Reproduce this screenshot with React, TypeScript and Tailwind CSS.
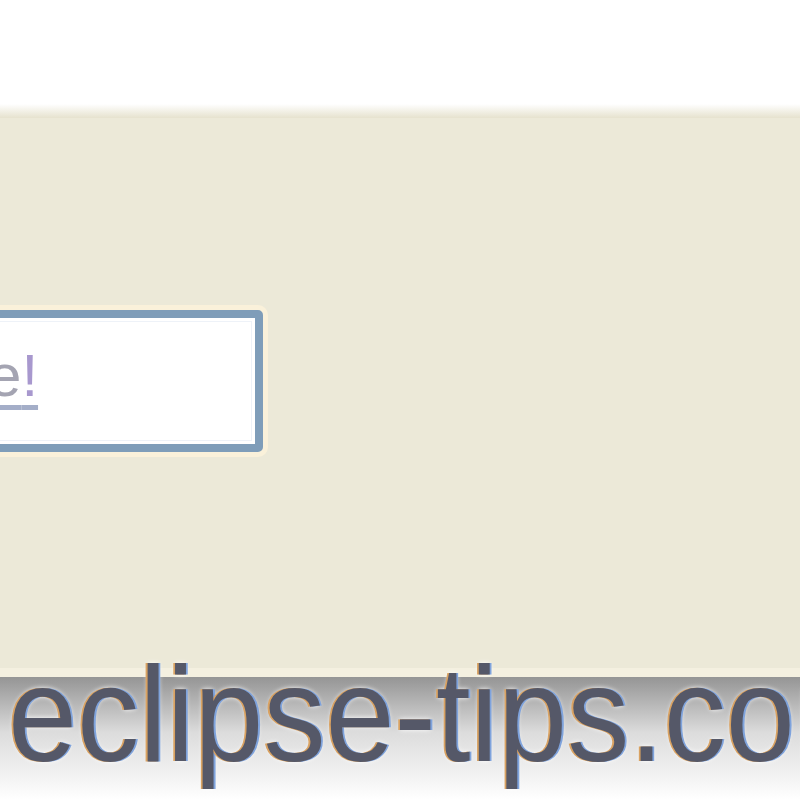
import React from 'react';

export default function App() {
  return (
    <div className="w-[800px] h-[800px] overflow-hidden flex flex-col bg-white font-['Liberation_Sans',Arial,sans-serif]">
      {/* top white area */}
      <div className="h-[104px] bg-white" />
      <div className="h-[14px] bg-linear-to-b from-white to-[#E6E2CE]" />

      {/* dialog panel */}
      <div className="flex-1 bg-[#ECE9D8] flex flex-col">
        <div className="pt-[192px]">
          <div className="ml-[-60px] w-[323px] h-[142px] rounded-[5px] border-[8px] border-[#7F9DB9] bg-white p-[3px] shadow-[0_0_0_5px_#FAF1DA]">
            <div className="h-full border border-[#EEF2F8] pt-[24px] pl-[36px] text-[60px] leading-[60px] whitespace-nowrap">
              <span className="underline decoration-[5px] underline-offset-[9px] decoration-[#A4AEC8]">
                <span className="text-[#A4A4B2]">e</span>
                <span className="text-[#A898CE]">!</span>
              </span>
            </div>
          </div>
        </div>
        <div className="flex-1" />
        <div className="h-[9px] bg-[#F4F0E0]" />
      </div>

      {/* watermark strip */}
      <div className="h-[123px] bg-linear-to-b from-[#959595] via-[#dcdcdc] via-45% to-white pl-[8px]">
        <div className="mt-[-12px] leading-[100px] text-[135px] whitespace-nowrap">
          <span className="inline-block origin-left scale-x-[0.92] text-[#555868] [text-shadow:-2px_0_0_#d9a262,2px_0_0_#7fa3dc,0_0_6px_#ffffff]">
            eclipse-tips.com
          </span>
        </div>
      </div>
    </div>
  );
}
